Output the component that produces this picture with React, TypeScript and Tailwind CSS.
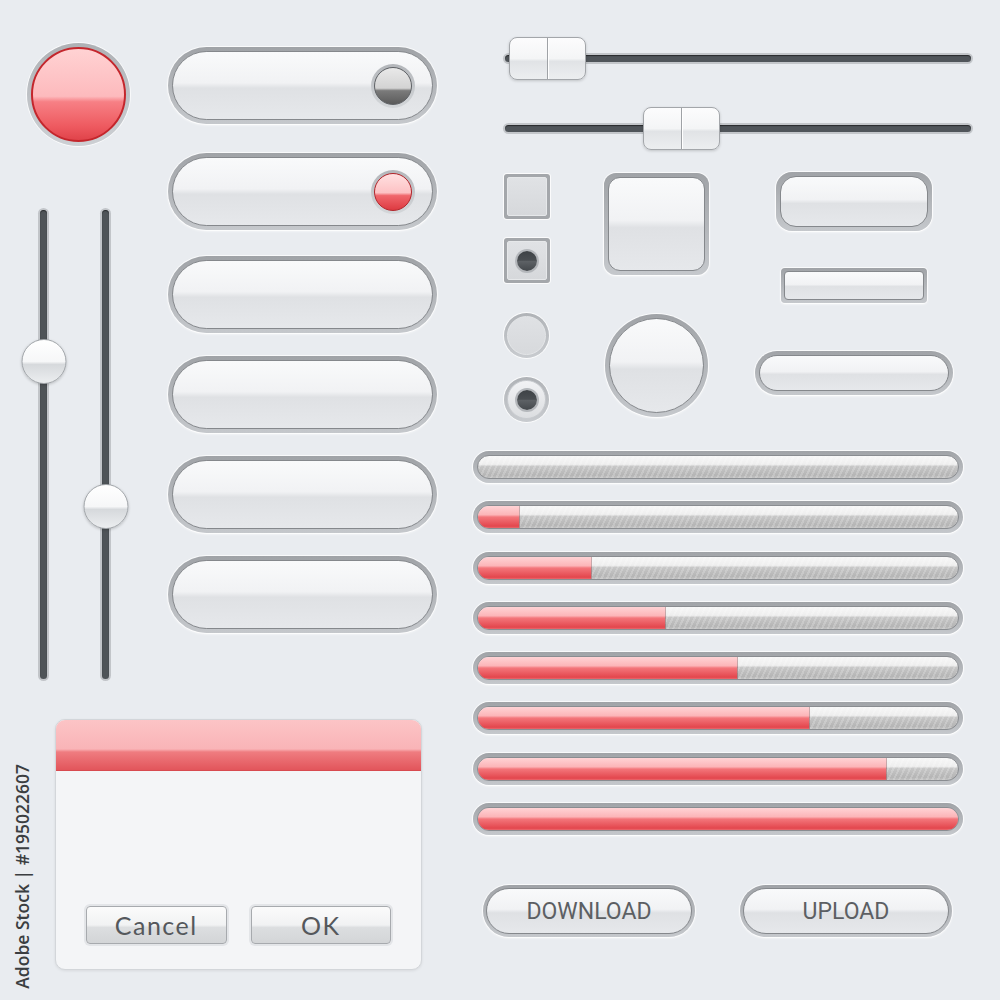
import clsx from 'clsx'
import type { ReactNode } from 'react'

// shared bezel + glossy face used by most controls
const RING =
  'bg-[linear-gradient(180deg,#a0a3a7_0%,#c5c8cc_100%)] shadow-[0_0_0_1px_rgba(255,255,255,0.7),0_1px_3px_rgba(255,255,255,0.9)]'
const FACE =
  'border border-[#85888c] bg-[linear-gradient(180deg,#f9fafb_0%,#f1f2f4_46%,#dfe1e4_54%,#e6e8eb_100%)]'

const TRACK_STRIPES =
  'bg-[image:repeating-linear-gradient(115deg,rgba(255,255,255,0.2)_0px,rgba(255,255,255,0.2)_2px,transparent_2px,transparent_5px),linear-gradient(180deg,#f7f7f7_0%,#eeeeee_38%,#c6c6c6_48%,#b5b5b5_88%,#c4c4c4_100%)]'
const RED_FILL =
  'bg-[linear-gradient(180deg,#ffd3d5_0%,#fcb5b8_40%,#f3767b_50%,#e3464d_92%,#ea6a6f_100%)]'

const progress = [0, 8.5, 23.5, 39, 54, 69, 85, 100]
const pillGaps = ['', 'mt-[29px]', 'mt-[26px]', 'mt-[23px]', 'mt-[23px]', 'mt-[23px]']

function Glossy({
  className,
  radius,
  pad = 'p-[4px]',
  children,
  inner,
}: {
  className?: string
  radius: string
  pad?: string
  children?: ReactNode
  inner?: string
}) {
  return (
    <div className={clsx(RING, radius, pad, className)}>
      <div className={clsx('h-full w-full', radius, FACE, inner)}>{children}</div>
    </div>
  )
}

function Knob({ red }: { red?: boolean }) {
  return (
    <div className="h-[44px] w-[44px] rounded-full bg-[linear-gradient(180deg,#b3b6ba,#d4d7da)] p-[3px]">
      <div
        className={clsx(
          'h-full w-full rounded-full border',
          red
            ? 'border-[#b3242a] bg-[linear-gradient(180deg,#ffe0e1_0%,#fdc2c4_52%,#f0676c_60%,#dd3a41_100%)]'
            : 'border-[#5f6266] bg-[linear-gradient(180deg,#e9e9e9_0%,#d3d3d3_56%,#7b7b7b_63%,#5b5b5b_100%)]'
        )}
      />
    </div>
  )
}

function VTrack({ thumbTop }: { thumbTop: string }) {
  return (
    <div className="relative h-[473px] w-[11px] rounded-full bg-[#c2c5c9] p-[2px]">
      <div className="h-full w-full rounded-full bg-[#4f5458] shadow-[inset_0_1px_1px_rgba(0,0,0,0.5)]" />
      <div
        className={clsx(
          'absolute left-1/2 h-[45px] w-[45px] -translate-x-1/2 rounded-full border border-[#a1a5a9] bg-[linear-gradient(180deg,#ffffff_0%,#f6f7f8_50%,#d6d9dc_57%,#eceef0_100%)] shadow-[0_1px_3px_rgba(0,0,0,0.2)]',
          thumbTop
        )}
      />
    </div>
  )
}

function HSlider({ thumbLeft, className }: { thumbLeft: string; className?: string }) {
  return (
    <div className={clsx('relative flex h-[43px] w-[470px] items-center', className)}>
      <div className="h-[11px] w-full rounded-full bg-[#c3c6ca] p-[2px]">
        <div className="h-full w-full rounded-full bg-[#50555a] shadow-[inset_0_1px_1px_rgba(0,0,0,0.5)]" />
      </div>
      <div
        className={clsx(
          'absolute top-0 flex h-[43px] w-[77px] justify-center rounded-[8px] border border-[#a3a6aa] bg-[linear-gradient(180deg,#fcfcfd_0%,#f4f5f6_50%,#e1e3e6_57%,#eceef0_100%)] shadow-[0_1px_3px_rgba(0,0,0,0.18)]',
          thumbLeft
        )}
      >
        <div className="h-full w-[1px] bg-[#9fa2a6] shadow-[1px_0_0_#ffffff]" />
      </div>
    </div>
  )
}

function Dot() {
  return (
    <div className="h-[20px] w-[20px] rounded-full bg-[linear-gradient(180deg,#3e4246_0%,#4a4e52_46%,#5d6165_52%,#44484c_100%)] shadow-[0_0_0_2px_#b4b7bb]" />
  )
}

function CheckBox({ checked, className }: { checked?: boolean; className?: string }) {
  return (
    <div
      className={clsx(
        'h-[45px] w-[46px] rounded-[3px] bg-[#a4a7ab] p-[3px] shadow-[0_0_0_1px_rgba(255,255,255,0.8)]',
        className
      )}
    >
      <div className="flex h-full w-full items-center justify-center rounded-[2px] border border-[#e6e8ea] bg-[linear-gradient(180deg,#e0e2e5,#d6d8db)]">
        {checked && <Dot />}
      </div>
    </div>
  )
}

function Radio({ checked, className }: { checked?: boolean; className?: string }) {
  return (
    <div
      className={clsx(
        'h-[45px] w-[45px] rounded-full bg-[linear-gradient(180deg,#b0b3b7,#c8cbcf)] p-[3px] shadow-[0_0_0_1px_rgba(255,255,255,0.8)]',
        className
      )}
    >
      <div
        className={clsx(
          'flex h-full w-full items-center justify-center rounded-full border',
          checked
            ? 'border-[#c9ccd0] bg-[linear-gradient(180deg,#f1f2f4,#dcdee1)]'
            : 'border-[#e4e6e8] bg-[linear-gradient(180deg,#dfe1e4,#d7d9dc)]'
        )}
      >
        {checked && <Dot />}
      </div>
    </div>
  )
}

function ProgressBar({ value }: { value: number }) {
  return (
    <div className={clsx('h-[32px] w-[490px] rounded-full p-[4px]', RING)}>
      <div className={clsx('flex h-full w-full overflow-hidden rounded-full border border-[#8a8d91]', TRACK_STRIPES)}>
        {value > 0 && (
          <div
            className={clsx('h-full shadow-[1px_0_0_rgba(120,30,35,0.35)]', RED_FILL)}
            style={{ width: `${value}%` }}
          />
        )}
      </div>
    </div>
  )
}

function DialogButton({ label }: { label: string }) {
  return (
    <div className="flex h-[38px] flex-1 items-center justify-center rounded-[4px] border border-[#a7aaae] bg-[linear-gradient(180deg,#fbfbfb_0%,#f1f2f3_50%,#dcdee0_57%,#d3d5d7_100%)] shadow-[0_0_0_2px_#e3e5e8]">
      <span className="font-['Lato',sans-serif] text-[25px] leading-none tracking-[1.5px] text-[#55585c]">
        {label}
      </span>
    </div>
  )
}

function TextButton({ label }: { label: string }) {
  return (
    <Glossy className="h-[52px] w-[212px]" radius="rounded-full" pad="p-[3px]" inner="flex items-center justify-center">
      <span className="font-['Roboto',sans-serif] text-[23px] leading-none text-[#5c5f63]">{label}</span>
    </Glossy>
  )
}

export default function App() {
  return (
    <div className="relative flex h-[1000px] w-[1000px] overflow-hidden bg-[#e9ecf0]">
      {/* left half: big button, vertical sliders, pills, dialog */}
      <div className="flex w-[473px] flex-col">
        <div className="flex pl-[27px] pt-[43px]">
          <div className="flex w-[104px] flex-col">
            <div className="h-[103px] w-[103px] rounded-full bg-[linear-gradient(180deg,#aeb1b5,#cdd0d4)] p-[4px] shadow-[0_0_0_1px_rgba(255,255,255,0.7)]">
              <div className="h-full w-full rounded-full border-2 border-[#c4262c] bg-[linear-gradient(180deg,#ffd2d3_0%,#fdbabd_52%,#f78085_58%,#ee5a60_85%,#e0434a_100%)]" />
            </div>
            <div className="mt-[62px] flex gap-[51px] pl-[11px]">
              <VTrack thumbTop="top-[131px]" />
              <VTrack thumbTop="top-[276px]" />
            </div>
          </div>

          <div className="ml-[37px] flex flex-col pt-[4px]">
            {pillGaps.map((gap, i) => (
              <Glossy
                key={i}
                className={clsx('h-[77px] w-[269px]', gap)}
                radius="rounded-full"
                inner={i < 2 ? 'flex items-center justify-end pr-[17px]' : undefined}
              >
                {i === 0 && <Knob />}
                {i === 1 && <Knob red />}
              </Glossy>
            ))}
          </div>
        </div>

        <div className="ml-[55px] mt-[38px] flex h-[251px] w-[367px] flex-col overflow-hidden rounded-[10px] border border-[#d3d6da] bg-[#f4f5f7] shadow-[0_1px_3px_rgba(0,0,0,0.08)]">
          <div className="h-[51px] border-b border-[#d84a50] bg-[linear-gradient(180deg,#fcc4c6_0%,#f9b4b7_58%,#ef7c80_64%,#e2555b_100%)]" />
          <div className="flex flex-1 items-end gap-[24px] px-[30px] pb-[25px]">
            <DialogButton label="Cancel" />
            <DialogButton label="OK" />
          </div>
        </div>
      </div>

      {/* right half: sliders, small controls, progress bars, actions */}
      <div className="flex flex-col pt-[37px]">
        <HSlider thumbLeft="left-[6px]" className="ml-[30px]" />
        <HSlider thumbLeft="left-[140px]" className="ml-[30px] mt-[27px]" />

        <div className="mt-[22px] flex h-[279px] pl-[31px]">
          <div className="flex w-[46px] flex-col pt-[2px]">
            <CheckBox />
            <CheckBox checked className="mt-[19px]" />
            <Radio className="mt-[30px]" />
            <Radio checked className="mt-[19px]" />
          </div>
          <div className="ml-[54px] flex w-[105px] flex-col items-center pt-[1px]">
            <Glossy className="h-[102px] w-[105px]" radius="rounded-[12px]" />
            <Glossy className="mt-[39px] h-[103px] w-[103px]" radius="rounded-full" />
          </div>
          <div className="ml-[46px] flex w-[198px] flex-col items-center">
            <Glossy className="h-[59px] w-[156px]" radius="rounded-[16px]" />
            <Glossy className="mt-[37px] h-[35px] w-[146px]" radius="rounded-[4px]" pad="p-[3px]" />
            <Glossy className="mt-[48px] h-[44px] w-[198px]" radius="rounded-full" />
          </div>
        </div>

        <div className="flex flex-col gap-[18.3px]">
          {progress.map((v, i) => (
            <ProgressBar key={i} value={v} />
          ))}
        </div>

        <div className="mt-[50px] flex gap-[45px] pl-[10px]">
          <TextButton label="DOWNLOAD" />
          <TextButton label="UPLOAD" />
        </div>
      </div>

      <div className="absolute left-[14px] top-[764px] rotate-180 font-['Open_Sans',sans-serif] text-[17.5px] font-semibold leading-none text-[#3b3e41] [writing-mode:vertical-rl]">
        Adobe Stock | #195022607
      </div>
    </div>
  )
}
